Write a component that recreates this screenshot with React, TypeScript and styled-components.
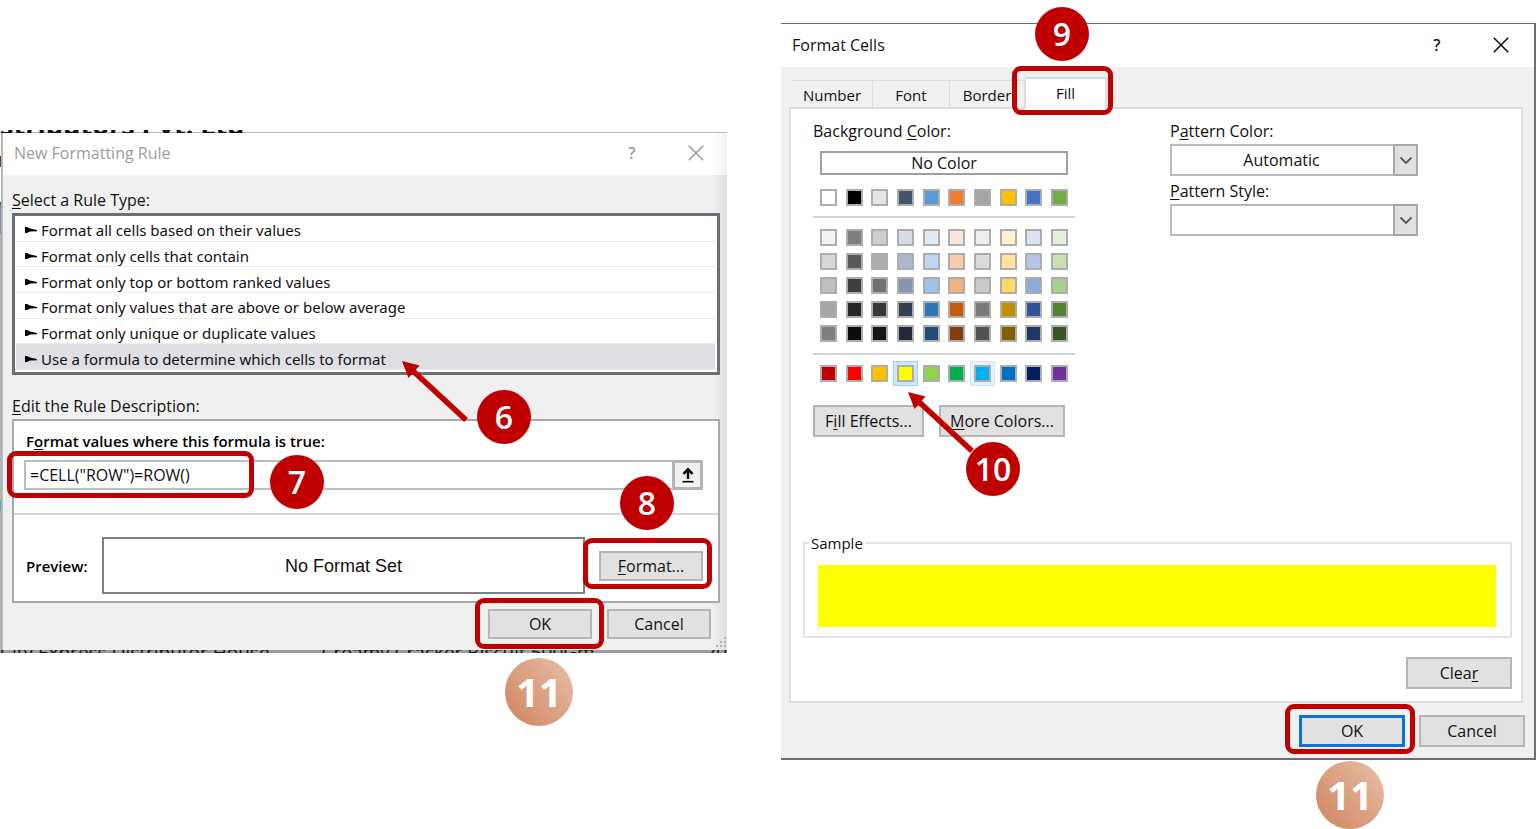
import React from "react";
import styled, { createGlobalStyle, css } from "styled-components";

const RED = "#c00000";

const GlobalStyle = createGlobalStyle`
  *, *::before, *::after { box-sizing: border-box; }
  body { margin: 0; background: #fff; }
  body, button, input, select {
    font-family: "Open Sans", "Noto Sans", sans-serif;
    font-size: 16px;
    line-height: 20px;
    color: #111;
  }
  u { text-underline-offset: 2px; }
`;

const Page = styled.main`
  display: grid;
  grid-template-columns: 727fr 755fr;
  column-gap: 54px;
  align-items: start;
  padding-bottom: 69px;
`;

/* ---------- annotations ---------- */

const Badge = styled.span<{ $x: number; $y: number; $final?: boolean }>`
  position: absolute;
  left: ${(p) => p.$x}px;
  top: ${(p) => p.$y}px;
  z-index: 2;
  display: flex;
  align-items: center;
  justify-content: center;
  width: ${(p) => (p.$final ? 68 : 54)}px;
  height: ${(p) => (p.$final ? 68 : 54)}px;
  border-radius: 50%;
  background: ${(p) => (p.$final ? "linear-gradient(50deg, #d0835b, #e7c0ab)" : RED)};
  color: #fff;
  font-size: ${(p) => (p.$final ? 40 : 32)}px;
  line-height: 40px;
  font-weight: ${(p) => (p.$final ? 700 : 600)};
`;

const ring = css`
  content: "";
  position: absolute;
  border: 5px solid ${RED};
  border-radius: 9px;
  pointer-events: none;
  z-index: 1;
`;

const Ringed = styled.span<{ $inset: string }>`
  position: relative;
  display: flex;
  &::after {
    ${ring}
    inset: ${(p) => p.$inset};
  }
`;

const ArrowSvg = styled.svg<{ $x: number; $y: number }>`
  position: absolute;
  left: ${(p) => p.$x}px;
  top: ${(p) => p.$y}px;
  z-index: 1;
  pointer-events: none;
`;

function Arrow({ x, y }: { x: number; y: number }) {
  return (
    <ArrowSvg $x={x} $y={y} width="68" height="64" viewBox="0 0 68 64">
      <path d="M9 8 64 59" stroke={RED} strokeWidth="5.600" fill="none" />
      <path d="M0 0 17.500 4.500 6.500 17Z" fill={RED} />
    </ArrowSvg>
  );
}

/* ---------- shared parts ---------- */

const TitleBar = styled.header<{ $muted?: boolean }>`
  display: flex;
  align-items: center;
  height: 43px;
  padding: 0 17px 2px 11px;
  background: #fff;
  color: ${(p) => (p.$muted ? "#9d9d9d" : "#111")};
`;

const Title = styled.h1`
  flex: 1;
  margin: 0;
  font-size: 16px;
  font-weight: 400;
`;

const TitleButton = styled.button`
  display: grid;
  place-items: center;
  width: 32px;
  height: 32px;
  margin-left: 32px;
  padding: 0;
  border: 0;
  background: none;
  color: inherit;
  font-weight: 600;
`;

function Cross() {
  return (
    <svg width="16" height="16" viewBox="0 0 16 16" stroke="currentColor" strokeWidth="1.600" fill="none">
      <path d="M.8.8 15.200 15.200M15.200.8.8 15.200" />
    </svg>
  );
}

const PushButton = styled.button<{ $w?: number; $focused?: boolean }>`
  width: ${(p) => p.$w ?? 106}px;
  height: 32px;
  padding: 0;
  border: ${(p) => (p.$focused ? "3px solid #0a74d8" : "2px solid #b5b5b5")};
  background: #e1e1e1;
`;

const RuleButton = styled(PushButton)`
  width: 104px;
  height: 30px;
`;

const Divider = styled.hr`
  width: 100%;
  height: 2px;
  margin: 0;
  border: 0;
  background: #d4d4d4;
`;

const FieldLabel = styled.label`
  display: block;
`;

/* ---------- New Formatting Rule ---------- */

const RuleDialog = styled.section`
  position: relative;
  margin-top: 130px;
  padding-left: 3px;
  background:
    linear-gradient(90deg, transparent 1px, #a8a8a8 1px, #c4c4c4 3px) 0 3px / 3px 100% no-repeat,
    linear-gradient(#fff 26px, #7a3d1b 26px, #7a3d1b 37px, #fff 37px, #fff 72px, #217346 72px, #217346 74px,
      #7f92a8 76px, #7f92a8 104px, #b4b4b4 104px, #b4b4b4 370px, #5fa8cc 370px, #5fa8cc 381px, #b4b4b4 381px)
      0 0 / 3px 100% no-repeat;
`;

const SheetStrip = styled.div<{ $end?: boolean }>`
  display: flex;
  align-items: ${(p) => (p.$end ? "center" : "flex-end")};
  gap: 52px;
  height: 3px;
  margin-left: -3px;
  overflow: hidden;
  white-space: nowrap;
  background: ${(p) => (p.$end ? "#9c9c9c" : "linear-gradient(#fff 2px, #b9b9b9 2px)")};
  font-size: ${(p) => (p.$end ? 19 : 27)}px;
  line-height: ${(p) => (p.$end ? 14 : 17)}px;
  font-weight: ${(p) => (p.$end ? 400 : 700)};
`;

const StripEnd = styled.span`
  margin-left: auto;
`;

const RuleBody = styled.div`
  padding: 15px 7px 11px 9px;
  background: linear-gradient(270deg, #dedede, #f0f0f0 14px);
`;

const RuleHeader = styled(TitleBar)`
  height: 42px;
  padding-right: 15px;
  background: linear-gradient(270deg, #f1f1f1, #fff 14px);
`;

const RuleList = styled.ul`
  display: flex;
  flex-direction: column;
  height: 162px;
  margin: 3px 0 21px;
  padding: 0 2px 2px 1px;
  border: 3px solid #6b7076;
  background: #fff;
  list-style: none;
`;

const RuleItem = styled.li<{ $selected?: boolean }>`
  display: flex;
  flex: 1;
  border-bottom: 1px solid #ececec;
  background: ${(p) => (p.$selected ? "#e0dfe4" : "#fff")};
`;

const RuleChoice = styled.button`
  display: flex;
  align-items: center;
  gap: 4px;
  width: 100%;
  padding: 4px 0 0 9px;
  border: 0;
  background: none;
  font-family: "Noto Sans", "Open Sans", sans-serif;
  font-size: 15px;
  text-align: left;
`;

const DescriptionBox = styled.div`
  margin-top: 3px;
  border: 2px solid #a5a8ae;
  background: #fff;
`;

const FormulaArea = styled.div`
  padding: 10px 15px 23px 10px;
`;

const StrongLabel = styled.label`
  display: block;
  padding-left: 2px;
  font-size: 15px;
  font-weight: 600;
  color: #000;
`;

const FormulaRow = styled.div`
  position: relative;
  display: flex;
  margin-top: 9px;
  &::before {
    ${ring}
    left: -17px;
    top: -9px;
    width: 247px;
    height: 47px;
  }
`;

const FormulaInput = styled.input`
  flex: 1;
  min-width: 0;
  height: 30px;
  padding: 0 4px;
  border: 2px solid #bcbcc2;
  border-right: 0;
  outline: 0;
`;

const PickButton = styled.button`
  display: grid;
  place-items: center;
  width: 31px;
  height: 30px;
  padding: 0;
  border: 3px solid #b3b3b8;
  background: #f2f2f2;
`;

const PreviewRow = styled.div`
  display: flex;
  align-items: center;
  gap: 12px;
  padding: 22px 15px 7px 12px;
`;

const PreviewTitle = styled.span`
  width: 64px;
  font-size: 15px;
  font-weight: 600;
  color: #000;
`;

const PreviewBox = styled.output`
  display: grid;
  flex: 1;
  place-items: center;
  height: 57px;
  margin-right: 2px;
  border: 2px solid #7f7f7f;
  font-family: "Liberation Sans", Arial, sans-serif;
  font-size: 18px;
`;

const RuleFooter = styled.footer`
  display: flex;
  justify-content: flex-end;
  gap: 15px;
  padding: 6px 9px 0 0;
`;

const Grip = styled.svg`
  position: absolute;
  right: 0;
  bottom: 4px;
`;

const RULES = [
  "Format all cells based on their values",
  "Format only cells that contain",
  "Format only top or bottom ranked values",
  "Format only values that are above or below average",
  "Format only unique or duplicate values",
  "Use a formula to determine which cells to format",
];

function NewFormattingRule() {
  return (
    <RuleDialog>
      <SheetStrip>stributors Pvt. Ltd</SheetStrip>
      <RuleHeader $muted>
        <Title>New Formatting Rule</Title>
        <TitleButton>?</TitleButton>
        <TitleButton aria-label="Close"><Cross /></TitleButton>
      </RuleHeader>
      <RuleBody>
        <FieldLabel as="div" id="rule-type"><u>S</u>elect a Rule Type:</FieldLabel>
        <RuleList aria-labelledby="rule-type">
          {RULES.map((rule, i) => (
            <RuleItem key={rule} $selected={i === RULES.length - 1}>
              <RuleChoice type="button">
                <svg width="12" height="8" viewBox="0 0 12 8">
                  <path d="M0 1h2l3 1.500L12 4v1.200L5 5.600 2 7H0Z" fill="#000" />
                </svg>
                {rule}
              </RuleChoice>
            </RuleItem>
          ))}
        </RuleList>
        <FieldLabel as="div"><u>E</u>dit the Rule Description:</FieldLabel>
        <DescriptionBox>
          <FormulaArea>
            <StrongLabel htmlFor="formula">F<u>o</u>rmat values where this formula is true:</StrongLabel>
            <FormulaRow>
              <FormulaInput id="formula" defaultValue={'=CELL("ROW")=ROW()'} />
              <PickButton aria-label="Collapse">
                <svg width="14" height="16" viewBox="0 0 14 16" fill="none" stroke="#000">
                  <path d="M7 12V2.500M2.500 6.800 7 2.300l4.500 4.500" strokeWidth="2.400" />
                  <path d="M1.500 14.700h11" strokeWidth="1.600" />
                </svg>
              </PickButton>
              <Badge $x={246} $y={-5}>7</Badge>
            </FormulaRow>
          </FormulaArea>
          <Divider />
          <PreviewRow>
            <PreviewTitle>Preview:</PreviewTitle>
            <PreviewBox>No Format Set</PreviewBox>
            <Ringed $inset="-13px -9px -8px -16px">
              <RuleButton><u>F</u>ormat...</RuleButton>
              <Badge $x={21} $y={-75}>8</Badge>
            </Ringed>
          </PreviewRow>
        </DescriptionBox>
        <RuleFooter>
          <Ringed $inset="-11px -12px -10px -13px">
            <RuleButton>OK</RuleButton>
            <Badge $final $x={17} $y={49}>11</Badge>
          </Ringed>
          <RuleButton>Cancel</RuleButton>
        </RuleFooter>
      </RuleBody>
      <SheetStrip $end>
        <span>City Express Distributor House</span>
        <span>Creamy Cracker Biscuit 500Gm</span>
        <StripEnd>20</StripEnd>
      </SheetStrip>
      <Grip width="13" height="13" viewBox="0 0 13 13" fill="#b5b5b5">
        <path d="M10 1h2v2h-2zM10 5h2v2h-2zM10 9h2v2h-2zM6 5h2v2H6zM6 9h2v2H6zM2 9h2v2H2z" />
      </Grip>
      <Arrow x={402} y={231} />
      <Badge $x={477} $y={260}>6</Badge>
    </RuleDialog>
  );
}

/* ---------- Format Cells ---------- */

const CellsDialog = styled.section`
  position: relative;
  margin-top: 23px;
  border: 2px solid #6e6e6e;
  border-width: 1px 2px 2px 0;
  background: #f0f0f0;
`;

const TabBar = styled.nav`
  display: flex;
  align-items: flex-end;
  height: 40px;
  padding-left: 11px;
`;

const Tab = styled.button<{ $w: number }>`
  width: ${(p) => p.$w}px;
  height: 27px;
  padding: 2px 0 0;
  border: solid #dcdcdc;
  border-width: 1px 1px 0 0;
  background: #f0f0f0;
  font-size: 15px;
`;

const ActiveTab = styled(Tab)`
  height: 32px;
  margin-bottom: -2px;
  padding: 0 0 2px;
  border-width: 2px 2px 0 1px;
  background: #fff;
  z-index: 1;
`;

const FillPanel = styled.div`
  margin: 0 11px 0 8px;
  padding: 12px 9px 12px 12px;
  border: 2px solid #dfdfdf;
  background: #fff;
`;

const FillColumns = styled.div`
  display: flex;
  gap: 95px;
  padding-left: 10px;
`;

const ColorColumn = styled.div`
  width: 262px;
`;

const PatternColumn = styled.div`
  width: 248px;
`;

const PaletteArea = styled.div`
  padding: 0 7px;
`;

const NoColorButton = styled.button`
  width: 100%;
  height: 24px;
  margin: 10px 0 14px;
  padding: 0;
  border: 2px solid #a0a0a0;
  background: #fff;
`;

const SwatchRow = styled.div`
  display: flex;
  justify-content: space-between;
`;

const Shades = styled(PaletteArea)`
  display: flex;
  flex-direction: column;
  gap: 7px;
  margin: 11px 0;
`;

const ThemeRow = styled(PaletteArea)`
  margin-bottom: 10px;
`;

const StandardRow = styled(PaletteArea)`
  margin: 10px 0 23px;
`;

const Swatch = styled.button<{ $color: string; $mark?: string[] }>`
  width: 17px;
  height: 17px;
  padding: 0;
  border: 2px solid #adadad;
  background: ${(p) => p.$color};
  ${(p) => p.$mark && css`box-shadow: 0 0 0 3px ${p.$mark[0]}, 0 0 0 4px ${p.$mark[1]};`}
`;

const ButtonRow = styled.div`
  display: flex;
  gap: 15px;
`;

const SelectBox = styled.div`
  position: relative;
  margin: 3px 0 5px;
`;

const Select = styled.select`
  display: block;
  appearance: none;
  width: 100%;
  height: 32px;
  padding: 0 25px 0 0;
  border: 2px solid #b9b9c0;
  border-radius: 0;
  background: #fff;
  text-align-last: center;
`;

const SelectArrow = styled.span`
  position: absolute;
  right: 0;
  top: 0;
  display: grid;
  place-items: center;
  width: 25px;
  height: 32px;
  border: 2px solid #a8a8ac;
  background: #e1e1e1;
  pointer-events: none;
`;

const SampleBox = styled.fieldset`
  min-width: 0;
  margin: 96px 0 19px;
  padding: 12px 14px 9px 13px;
  border: 2px solid #e4e4e4;
`;

const SampleTitle = styled.legend`
  margin-left: -9px;
  padding: 0 2px;
  font-size: 15px;
`;

const SampleFill = styled.div`
  height: 62px;
  background: #ffff00;
`;

const ClearRow = styled.div`
  display: flex;
  justify-content: flex-end;
`;

const CellsFooter = styled.footer`
  display: flex;
  justify-content: flex-end;
  gap: 14px;
  padding: 12px 9px 11px;
`;

const THEME = ["#ffffff", "#000000", "#e7e6e6", "#44546a", "#5b9bd5", "#ed7d31", "#a5a5a5", "#ffc000", "#4472c4", "#70ad47"];
const SHADES = [
  ["#f2f2f2", "#7f7f7f", "#d0cece", "#d6dce4", "#deebf6", "#fbe5d5", "#ededed", "#fff2cc", "#d9e2f3", "#e2efd9"],
  ["#d8d8d8", "#595959", "#aeabab", "#adb9ca", "#bdd7ee", "#f7cbac", "#dbdbdb", "#fee599", "#b4c6e7", "#c5e0b3"],
  ["#bfbfbf", "#3f3f3f", "#757070", "#8496b0", "#9cc3e5", "#f4b183", "#c9c9c9", "#ffd965", "#8eaadb", "#a8d08d"],
  ["#a5a5a5", "#262626", "#3a3838", "#323f4f", "#2e75b5", "#c55a11", "#7b7b7b", "#bf9000", "#2f5496", "#538135"],
  ["#7f7f7f", "#0c0c0c", "#171616", "#222a35", "#1e4e79", "#833c0b", "#525252", "#7f6000", "#1f3864", "#375623"],
];
const STANDARD = ["#c00000", "#ff0000", "#ffc000", "#ffff00", "#92d050", "#00b050", "#00b0f0", "#0070c0", "#002060", "#7030a0"];
const MARKS: Record<string, string[]> = {
  "#ffff00": ["#cce8ff", "#99d1ff"],
  "#00b0f0": ["#e5f3ff", "#cce8ff"],
};

function Swatches({ colors, marks = {} }: { colors: string[]; marks?: Record<string, string[]> }) {
  return (
    <SwatchRow>
      {colors.map((c) => (
        <Swatch key={c} type="button" aria-label={c} $color={c} $mark={marks[c]} />
      ))}
    </SwatchRow>
  );
}

function Chevron() {
  return (
    <SelectArrow>
      <svg width="14" height="9" viewBox="0 0 14 9" fill="none" stroke="#5a5a5a" strokeWidth="1.800">
        <path d="M1.500 1.500 7 7l5.500-5.500" />
      </svg>
    </SelectArrow>
  );
}

function FormatCells() {
  return (
    <CellsDialog>
      <TitleBar>
        <Title>Format Cells</Title>
        <TitleButton>?</TitleButton>
        <TitleButton aria-label="Close"><Cross /></TitleButton>
      </TitleBar>
      <TabBar>
        <Tab $w={81}>Number</Tab>
        <Tab $w={77}>Font</Tab>
        <Tab $w={75}>Border</Tab>
        <Ringed $inset="-11px -6px -8px -13px">
          <ActiveTab $w={82}>Fill</ActiveTab>
          <Badge $x={10} $y={-70}>9</Badge>
        </Ringed>
      </TabBar>
      <FillPanel>
        <FillColumns>
          <ColorColumn>
            <div>Background <u>C</u>olor:</div>
            <PaletteArea>
              <NoColorButton type="button">No Color</NoColorButton>
            </PaletteArea>
            <ThemeRow><Swatches colors={THEME} /></ThemeRow>
            <Divider />
            <Shades>
              {SHADES.map((row) => <Swatches key={row[0]} colors={row} />)}
            </Shades>
            <Divider />
            <StandardRow><Swatches colors={STANDARD} marks={MARKS} /></StandardRow>
            <ButtonRow>
              <PushButton $w={111}>F<u>i</u>ll Effects...</PushButton>
              <PushButton $w={126}><u>M</u>ore Colors...</PushButton>
            </ButtonRow>
          </ColorColumn>
          <PatternColumn>
            <FieldLabel htmlFor="pattern-color">P<u>a</u>ttern Color:</FieldLabel>
            <SelectBox>
              <Select id="pattern-color"><option>Automatic</option></Select>
              <Chevron />
            </SelectBox>
            <FieldLabel htmlFor="pattern-style"><u>P</u>attern Style:</FieldLabel>
            <SelectBox>
              <Select id="pattern-style"><option></option></Select>
              <Chevron />
            </SelectBox>
          </PatternColumn>
        </FillColumns>
        <SampleBox>
          <SampleTitle>Sample</SampleTitle>
          <SampleFill />
        </SampleBox>
        <ClearRow>
          <PushButton>Clea<u>r</u></PushButton>
        </ClearRow>
      </FillPanel>
      <CellsFooter>
        <Ringed $inset="-11px -10px -7px -14px">
          <PushButton $focused>OK</PushButton>
          <Badge $final $x={17} $y={46}>11</Badge>
        </Ringed>
        <PushButton>Cancel</PushButton>
      </CellsFooter>
      <Arrow x={127} y={368} />
      <Badge $x={185} $y={418}>10</Badge>
    </CellsDialog>
  );
}

export default function App() {
  return (
    <>
      <GlobalStyle />
      <Page>
        <NewFormattingRule />
        <FormatCells />
      </Page>
    </>
  );
}
